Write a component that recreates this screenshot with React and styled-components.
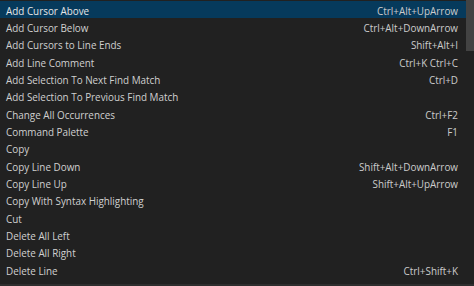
import React from "react";
import styled, { createGlobalStyle } from "styled-components";

const GlobalStyle = createGlobalStyle`
  html, body {
    margin: 0;
    padding: 0;
    background: #212121;
  }
`;

const commands = [
  { label: "Add Cursor Above", keys: "Ctrl+Alt+UpArrow" },
  { label: "Add Cursor Below", keys: "Ctrl+Alt+DownArrow" },
  { label: "Add Cursors to Line Ends", keys: "Shift+Alt+I" },
  { label: "Add Line Comment", keys: "Ctrl+K Ctrl+C" },
  { label: "Add Selection To Next Find Match", keys: "Ctrl+D" },
  { label: "Add Selection To Previous Find Match", keys: "" },
  { label: "Change All Occurrences", keys: "Ctrl+F2" },
  { label: "Command Palette", keys: "F1" },
  { label: "Copy", keys: "" },
  { label: "Copy Line Down", keys: "Shift+Alt+DownArrow" },
  { label: "Copy Line Up", keys: "Shift+Alt+UpArrow" },
  { label: "Copy With Syntax Highlighting", keys: "" },
  { label: "Cut", keys: "" },
  { label: "Delete All Left", keys: "" },
  { label: "Delete All Right", keys: "" },
  { label: "Delete Line", keys: "Ctrl+Shift+K" },
];

const Panel = styled.div`
  position: relative;
  width: 474px;
  height: 286px;
  box-sizing: border-box;
  overflow: hidden;
  background: #212121;
  border-bottom: 2px solid #2e2e2e;
  font-family: "Open Sans", "Noto Sans", sans-serif;
  font-size: 9.9px;
  color: #d0d0d0;
`;

const List = styled.ul`
  list-style: none;
  margin: 0;
  padding: 1px 0 0;
`;

const Row = styled.li`
  display: flex;
  align-items: center;
  justify-content: space-between;
  box-sizing: border-box;
  height: 17.35px;
  padding: 2px 16px 0 6px;
  background: ${(p) => (p.$active ? "#063a5c" : "transparent")};
  color: ${(p) => (p.$active ? "#e6e6e6" : "#d0d0d0")};
  white-space: nowrap;
`;

const Keys = styled.span`
  color: #cccccc;
`;

const Scrollbar = styled.div`
  position: absolute;
  top: 0;
  right: 0;
  width: 8px;
  height: 51px;
  background: #434343;
`;

export default function App() {
  return (
    <>
      <GlobalStyle />
      <Panel>
        <List>
          {commands.map((c, i) => (
            <Row key={c.label} $active={i === 0}>
              <span>{c.label}</span>
              <Keys>{c.keys}</Keys>
            </Row>
          ))}
        </List>
        <Scrollbar />
      </Panel>
    </>
  );
}
